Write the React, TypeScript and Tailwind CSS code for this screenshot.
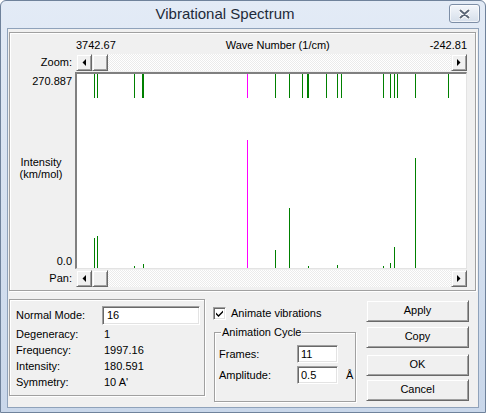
import React from 'react';

const TICKS: [number, number, string][] = [
  [94, 1, '#008000'], [97, 1, '#008000'], [134, 1, '#008000'], [142, 2, '#008000'],
  [247, 1, '#ff00ff'], [275, 1, '#008000'], [289, 1, '#008000'], [302, 1, '#008000'],
  [307, 2, '#008000'], [326, 1, '#008000'], [337, 1, '#008000'], [341, 1, '#008000'],
  [383, 1, '#008000'], [390, 1, '#008000'], [394, 1, '#008000'], [397, 1, '#008000'],
  [415, 1, '#008000'], [448, 1, '#008000'],
];

// x, top y, colour (bars run down to the baseline at 268)
const BARS: [number, number, string][] = [
  [94, 238, '#008000'], [97, 236, '#008000'], [134, 266, '#008000'], [143, 264, '#008000'],
  [247, 140, '#ff00ff'], [275, 250, '#008000'], [289, 208, '#008000'], [308, 266, '#008000'],
  [337, 265, '#008000'], [383, 266, '#008000'], [390, 263, '#008000'], [394, 247, '#008000'],
  [415, 158, '#008000'],
];

const raised =
  'border border-t-[#f0f0f0] border-l-[#f0f0f0] border-r-[#696969] border-b-[#696969] bg-[#f0f0f0] shadow-[inset_1px_1px_0_#fff,inset_-1px_-1px_0_#a0a0a0]';
const sunken =
  'border border-t-[#a0a0a0] border-l-[#a0a0a0] border-r-white border-b-white bg-white shadow-[inset_1px_1px_0_#696969,inset_-1px_-1px_0_#e3e3e3]';
const etched = 'border border-[#a0a0a0] shadow-[inset_1px_1px_0_#fff,1px_1px_0_#fff]';

function Arrow({ dir }: { dir: 'left' | 'right' }) {
  return (
    <div className={`flex h-full w-[16px] shrink-0 items-center justify-center ${raised}`}>
      <svg width="4" height="7" viewBox="0 0 4 7">
        {dir === 'left' ? <path d="M4 0V7L0.5 3.5Z" fill="#000" /> : <path d="M0 0V7L3.5 3.5Z" fill="#000" />}
      </svg>
    </div>
  );
}

function ScrollBar() {
  return (
    <div className="ml-[1px] flex h-[17px] w-[391px]">
      <Arrow dir="left" />
      <div className={`h-full w-[16px] shrink-0 ${raised}`} />
      <div className="h-full flex-1 bg-[repeating-conic-gradient(#ffffff_0_25%,#ebebeb_0_50%)] bg-[length:2px_2px]" />
      <Arrow dir="right" />
    </div>
  );
}

function Plot() {
  return (
    <div className="h-[197px] w-[392px] border-t-2 border-l-2 border-r border-b border-t-[#808080] border-l-[#808080] border-r-[#e3e3e3] border-b-[#e3e3e3] bg-white">
      <svg width="389" height="194" viewBox="77 74 389 194" shapeRendering="crispEdges" className="block">
        {TICKS.map(([x, w, c]) => (
          <rect key={'t' + x} x={x} y={74} width={w} height={24} fill={c} />
        ))}
        {BARS.map(([x, top, c]) => (
          <rect key={'b' + x} x={x} y={top} width={1} height={268 - top} fill={c} />
        ))}
      </svg>
    </div>
  );
}

function Button({ label, className = '' }: { label: string; className?: string }) {
  return (
    <div className={`flex h-[22px] w-[103px] items-center justify-center pb-[1px] ${raised} ${className}`}>
      {label}
    </div>
  );
}

function InfoRow({ label, value }: { label: string; value: string }) {
  return (
    <div className="flex h-[16px] items-center">
      <span className="w-[88px]">{label}</span>
      <span>{value}</span>
    </div>
  );
}

export default function App() {
  return (
    <div className="flex h-[413px] w-[486px] flex-col overflow-hidden rounded-t-[6px] border border-[#6f829b] bg-gradient-to-b from-[#e3ebf6] to-[#c9d7ea] font-['Liberation_Sans',Arial,sans-serif] text-[11px] leading-[13px] text-black">
      {/* title bar */}
      <div className="flex h-[27px] shrink-0 items-start">
        <div className="flex-1 pt-[4px] text-center text-[15px] leading-[18px] text-[#1e2a3a]">Vibrational Spectrum</div>
        <div className="mr-[5px] mt-[3px] flex h-[19px] w-[31px] items-center justify-center rounded-[3px] border border-[#7d8ea6] bg-gradient-to-b from-[#f4f7fb] to-[#d5deea] shadow-[inset_0_0_0_1px_#ffffffa0]">
          <svg width="11" height="10" viewBox="0 0 11 10">
            <path d="M1.5 1.5L9.5 8.5M9.5 1.5L1.5 8.5" stroke="#fff" strokeWidth="4" strokeLinecap="round" />
            <path d="M1.5 1.5L9.5 8.5M9.5 1.5L1.5 8.5" stroke="#5b6676" strokeWidth="2" strokeLinecap="round" />
          </svg>
        </div>
      </div>

      {/* client area */}
      <div className="mx-[6px] mb-[4px] flex flex-1 flex-col border border-[#8fa2ba] bg-[#f0f0f0] pl-[1px] pt-[3px]">
        {/* spectrum group */}
        <div className={`flex h-[259px] w-[467px] flex-col pt-[5px] ${etched}`}>
          <div className="grid h-[14px] grid-cols-[65px_392px] items-center">
            <div />
            <div className="flex justify-between pl-[1px]">
              <span>3742.67</span>
              <span className="pl-[10px]">Wave Number (1/cm)</span>
              <span>-242.81</span>
            </div>
          </div>
          <div className="mt-[2px] grid h-[17px] grid-cols-[65px_392px] items-center">
            <div className="pr-[3px] text-right">Zoom:</div>
            <ScrollBar />
          </div>
          <div className="mt-[1px] grid h-[197px] grid-cols-[65px_392px]">
            <div className="flex flex-col pr-[3px] pt-[3px] pb-[1px]">
              <div className="text-right">270.887</div>
              <div className="flex flex-1 flex-col items-center justify-center pb-[7px] leading-[12px]">
                <span>Intensity</span>
                <span>(km/mol)</span>
              </div>
              <div className="text-right">0.0</div>
            </div>
            <Plot />
          </div>
          <div className="mt-[1px] grid h-[17px] grid-cols-[65px_392px] items-center">
            <div className="pr-[3px] text-right">Pan:</div>
            <ScrollBar />
          </div>
        </div>

        {/* lower controls */}
        <div className="mt-[8px] flex">
          <div className={`h-[97px] w-[196px] pl-[6px] pt-[6px] ${etched}`}>
            <div className="flex h-[19px] items-center">
              <span className="w-[86px]">Normal Mode:</span>
              <div className={`flex h-[19px] w-[98px] items-center pl-[4px] ${sunken}`}>16</div>
            </div>
            <div className="mt-[1px]">
              <InfoRow label="Degeneracy:" value="1" />
              <InfoRow label="Frequency:" value="1997.16" />
              <InfoRow label="Intensity:" value="180.591" />
              <InfoRow label="Symmetry:" value="10 A'" />
            </div>
          </div>

          <div className="ml-[8px] w-[143px]">
            <div className="mt-[8px] flex h-[13px] items-center">
              <div className={`flex h-[13px] w-[13px] shrink-0 items-center justify-center ${sunken}`}>
                <svg width="7" height="7" viewBox="0 0 7 7">
                  <path d="M0 2.5L2.5 5L7 0.5V2.5L2.5 7L0 4.5Z" fill="#000" />
                </svg>
              </div>
              <span className="ml-[5px]">Animate vibrations</span>
            </div>
            <div className={`relative ml-[1px] mt-[12px] h-[70px] w-[142px] pl-[4px] pt-[12px] ${etched}`}>
              <span className="absolute -top-[7px] left-[6px] bg-[#f0f0f0] px-[1px]">Animation Cycle</span>
              <div className="flex h-[18px] items-center">
                <span className="w-[78px]">Frames:</span>
                <div className={`flex h-[18px] w-[41px] items-center pl-[3px] ${sunken}`}>11</div>
              </div>
              <div className="mt-[3px] flex h-[18px] items-center">
                <span className="w-[78px]">Amplitude:</span>
                <div className={`flex h-[18px] w-[41px] items-center pl-[3px] ${sunken}`}>0.5</div>
                <span className="ml-[8px]">Å</span>
              </div>
            </div>
          </div>

          <div className="ml-[10px] mt-[1px] flex flex-col">
            <Button label="Apply" />
            <Button label="Copy" className="mt-[4px]" />
            <Button label="OK" className="mt-[6px]" />
            <Button label="Cancel" className="mt-[3px]" />
          </div>
        </div>
      </div>
    </div>
  );
}
